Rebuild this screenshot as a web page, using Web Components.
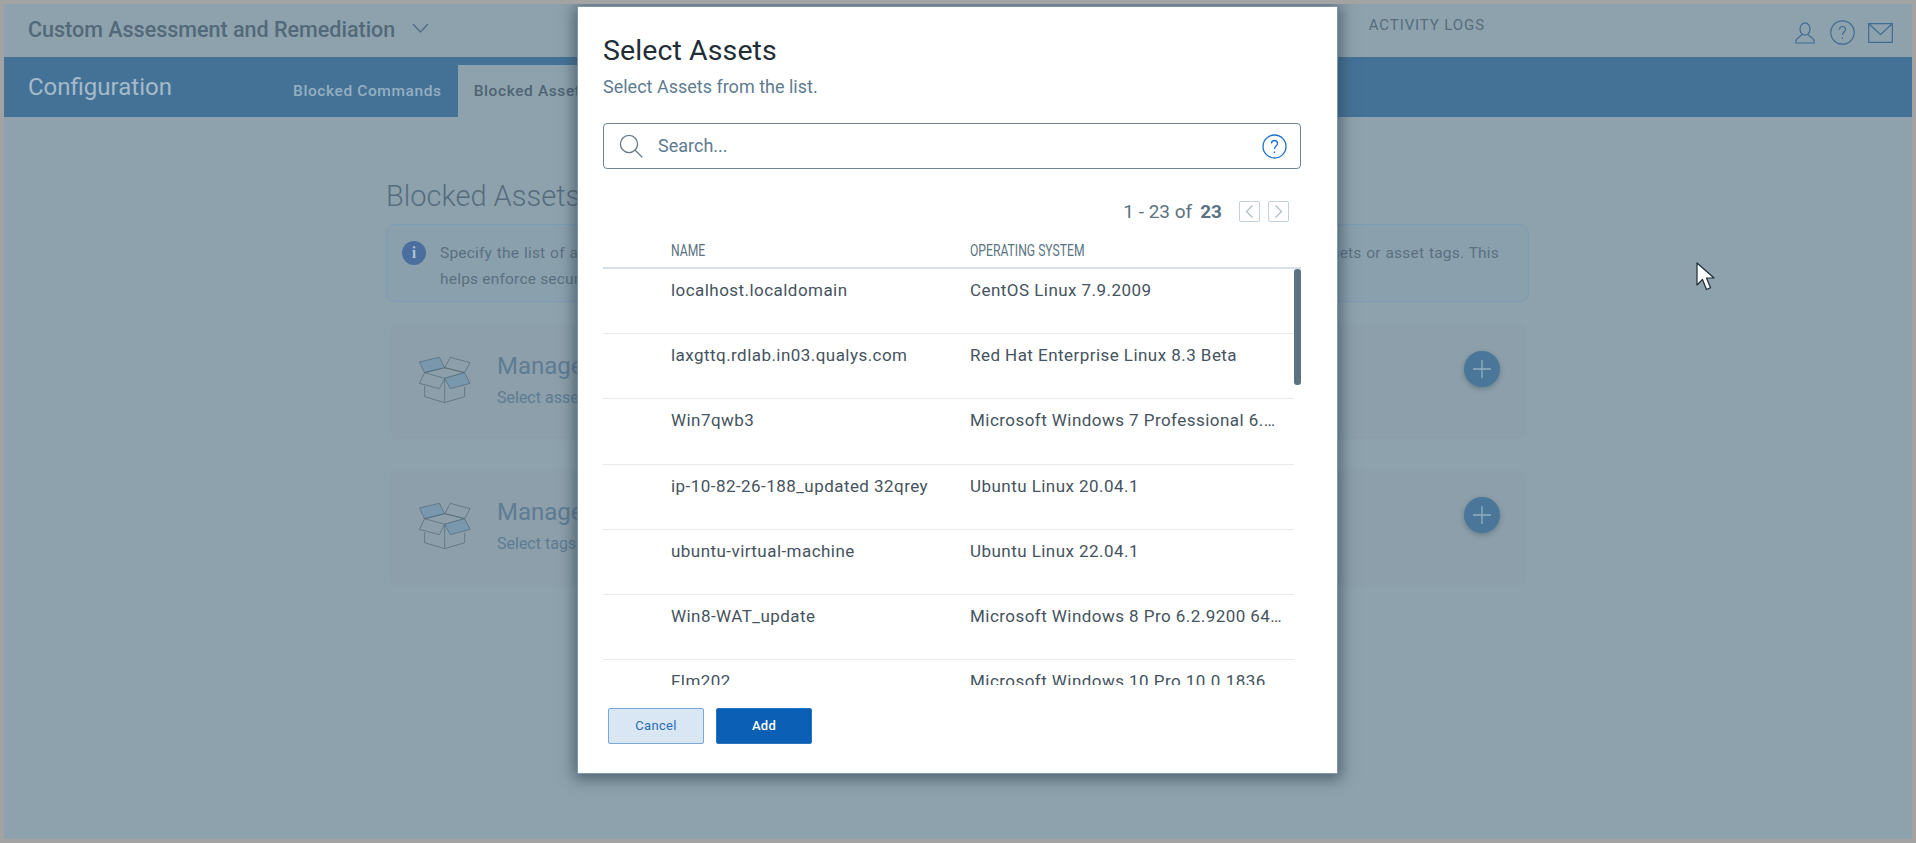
<!DOCTYPE html>
<html>
<head>
<meta charset="utf-8">
<title>Select Assets</title>
<style>
html, body { margin: 0; height: 100%; overflow: hidden; }
body { background: #a3a3a3; padding: 4px 4px 4px 4px; box-sizing: border-box; font-family: Roboto, "Liberation Sans", sans-serif; }
</style>
</head>
<body>
<ui-app>
  <top-bar></top-bar>
  <config-bar></config-bar>
  <page-content></page-content>
  <asset-dialog>
    <asset-row name="localhost.localdomain" os="CentOS Linux 7.9.2009"></asset-row>
    <asset-row name="laxgttq.rdlab.in03.qualys.com" os="Red Hat Enterprise Linux 8.3 Beta"></asset-row>
    <asset-row name="Win7qwb3" os="Microsoft Windows 7 Professional 6.1.7601 64 bit Edition"></asset-row>
    <asset-row name="ip-10-82-26-188_updated 32qrey" os="Ubuntu Linux 20.04.1"></asset-row>
    <asset-row name="ubuntu-virtual-machine" os="Ubuntu Linux 22.04.1"></asset-row>
    <asset-row name="Win8-WAT_update" os="Microsoft Windows 8 Pro 6.2.9200 64 bit Edition"></asset-row>
    <asset-row name="Flm202" os="Microsoft Windows 10 Pro 10.0.18363 64 bit Edition"></asset-row>
  </asset-dialog>
  <mouse-cursor></mouse-cursor>
</ui-app>

<script>
// small helper, every element just sets its html in the shadow root
function shadow(el, html) {
    el.attachShadow({ mode: 'open' });
    el.shadowRoot.innerHTML = html;
}

class UiApp extends HTMLElement {
    constructor() {
        super();
        shadow(this, `
<style>
:host { display: flex; flex-direction: column; position: relative; height: 835px; background: #8ea2ad; overflow: hidden; }
</style>
<slot></slot>`);
    }
}

class TopBar extends HTMLElement {
    constructor() {
        super();
        shadow(this, `
<style>
:host { display: flex; align-items: center; height: 53px; padding: 0 19px 0 24px; color: #52697a; }
.title { font-size: 21.500px; font-weight: 500; margin-bottom: 3px; }
.chev { margin: 0 0 6px 17px; }
.logs { margin-left: auto; margin-right: 310px; font-size: 15px; letter-spacing: .9px; align-self: flex-start; margin-top: 12px; line-height: 18px; color: #566d7d; }
.icons { display: flex; align-items: center; gap: 13px; margin-top: 4px; }
.icons svg:first-child { margin-right: 2px; }
svg { display: block; fill: none; stroke: #3f6c93; stroke-width: 1.200; }
.chev { stroke: #4f6d84; }
</style>
<div class="title">Custom Assessment and Remediation</div>
<svg class="chev" width="17" height="10" viewBox="0 0 17 10"><path d="M1 1l7.500 8L16 1"/></svg>
<div class="logs">ACTIVITY LOGS</div>
<div class="icons">
  <svg width="20" height="22" viewBox="0 0 20 22"><ellipse cx="10" cy="7" rx="5" ry="6.200"/><path d="M7 12c0 2-6 4-6 6.500V21h18v-2.500C19 16 13 14 13 12"/></svg>
  <svg width="25" height="25" viewBox="0 0 25 25"><circle cx="12.500" cy="12.500" r="11.700"/><path d="M9.500 9.500c0-4 6-4 6 0 0 2.500-3 2.500-3 5.500M12.500 17.500v1.500"/></svg>
  <svg width="25" height="20" viewBox="0 0 25 20"><path d="M.7.7h23.600v18.600H.7zM.7.700l11.800 10.800L24.300.700"/></svg>
</div>`);
    }
}

class ConfigBar extends HTMLElement {
    constructor() {
        super();
        shadow(this, `
<style>
:host { display: flex; height: 60px; background: #447297; padding-left: 24px; align-items: flex-end; }
.name { font-size: 24px; color: #a5bac8; align-self: center; width: 249px; }
.tab { height: 52px; line-height: 53px; font-size: 15.500px; font-weight: 500; letter-spacing: .6px; padding: 0 16px; color: #94afc0; white-space: nowrap; }
.tab.on { background: #8ea2ad; color: #4f6474; width: 220px; }
</style>
<div class="name">Configuration</div>
<div class="tab">Blocked Commands</div>
<div class="tab on">Blocked Assets</div>`);
    }
}

class BoxIcon extends HTMLElement {
    constructor() {
        super();
        shadow(this, `
<style>
:host { display: block; width: 55px; height: 49px; }
svg { display: block; fill: none; stroke: #566c7a; stroke-width: 2.200; stroke-linejoin: round; }
.f { fill: #7997ad; }
</style>
<svg width="55" height="49" viewBox="140 140 165 147">
  <path class="f" d="M147 158l60-14 16 31-60 15z"/>
  <path d="M240 144l59 16-16 30-60-15z"/>
  <path d="M163 190l60-15 60 15-60 17z"/>
  <path d="M163 190l-16 32 60 16 16-31"/>
  <path class="f" d="M283 190l16 32-59 16-17-31z"/>
  <path d="M163 230v32l60 18 60-18v-30M223 207v73"/>
</svg>`);
    }
}

class ManageCard extends HTMLElement {
    constructor() {
        super();
        shadow(this, `
<style>
:host { display: flex; height: 110px; background: #8c9faa; border-radius: 6px; box-shadow: 0 0 4px rgba(100,125,140,.2); padding: 29px 0 0 25px; box-sizing: border-box; position: relative; }
.txt { margin: -5px 0 0 25px; }
.t { font-size: 24px; line-height: 30px; color: #5e7c93; }
.s { font-size: 16px; line-height: 24px; margin-top: 5px; color: #5f7c92; }
.add { position: absolute; right: 23px; top: 24px; width: 36px; height: 36px; border-radius: 50%; background: #4a7699; box-shadow: 0 2px 5px rgba(60,85,105,.45); }
.add svg { display: block; margin: 9px; stroke: #93aec0; stroke-width: 1.300; }
</style>
<box-icon></box-icon>
<div class="txt"><div class="t">${this.getAttribute('heading')}</div><div class="s">${this.getAttribute('sub')}</div></div>
<div class="add"><svg width="18" height="18" viewBox="0 0 18 18"><path d="M9 0v18M0 9h18"/></svg></div>`);
    }
}

class PageContent extends HTMLElement {
    constructor() {
        super();
        shadow(this, `
<style>
:host { display: block; padding: 0 383px 0 382px; }
h2 { margin: 0; padding-top: 60px; font-size: 29px; font-weight: 300; line-height: 38px; height: 47px; color: #566d7e; }
.info { display: flex; height: 78px; box-sizing: border-box; border: 1px solid #7d9cb6; border-radius: 9px; padding: 15px 29px 0 15px; background: #8ba0ad; }
.i { flex: none; width: 24px; height: 24px; border-radius: 50%; background: #4a6f9e; color: #a9bfd2; font: 700 16px/24px "Liberation Serif", serif; text-align: center; margin: 1px 14px 0 0; }
.msg { font-size: 15.500px; line-height: 26px; letter-spacing: .2px; color: #5a7081; flex: 1; min-width: 0; }
.l1 { text-align-last: justify; white-space: nowrap; }
.cards { display: flex; flex-direction: column; gap: 36px; padding: 25px 6px 0; }
</style>
<h2>Blocked Assets</h2>
<div class="info">
  <div class="i">i</div>
  <div class="msg">
    <div class="l1">Specify the list of assets on which the configured commands must be blocked from use by selecting from available list of assets or asset tags. This</div>
    <div>helps enforce security policies on selected assets.</div>
  </div>
</div>
<div class="cards">
  <manage-card heading="Manage Assets" sub="Select assets from the list"></manage-card>
  <manage-card heading="Manage Tags" sub="Select tags from the list"></manage-card>
</div>`);
    }
}

class AssetRow extends HTMLElement {
    constructor() {
        super();
        shadow(this, `
<style>
:host { display: grid; grid-template-columns: 299px 314px; height: 65.200px; box-sizing: border-box; border-bottom: 1px solid #e6ebef; padding: 9px 0 0 68px; font-size: 17px; line-height: 24px; color: #45535e; letter-spacing: .45px; }
div { white-space: nowrap; overflow: hidden; text-overflow: ellipsis; }
</style>
<div>${this.getAttribute('name')}</div>
<div>${this.getAttribute('os')}</div>`);
    }
}

class AssetDialog extends HTMLElement {
    constructor() {
        super();
        shadow(this, `
<style>
:host { display: block; position: absolute; left: 573px; top: 2px; width: 761px; height: 768px; box-sizing: border-box; background: #fff; border: 1px solid #7d98a8; box-shadow: 0 2px 14px 3px rgba(45,65,78,.65); padding: 0 36px 0 25px; }
h1 { margin: 26px 0 0; font-size: 28.500px; font-weight: 400; line-height: 36px; color: #222d36; letter-spacing: .1px; }
.sub { margin-top: 6px; font-size: 18px; line-height: 24px; color: #5e7b90; }
.search { display: flex; align-items: center; height: 46px; box-sizing: border-box; margin-top: 24px; border: 1px solid #6f8796; border-radius: 4px; padding: 0 13px 0 15px; font-size: 18px; color: #5e7b90; }
.search span { flex: 1; margin: 0 0 2px 15px; }
.search svg { display: block; fill: none; }
.pager { display: flex; justify-content: flex-end; align-items: center; gap: 8px; height: 21px; margin-top: 32px; padding-right: 12px; font-size: 19px; color: #5a7282; }
.pager b { font-weight: 700; margin-right: 9px; }
.pg { width: 21px; height: 21px; box-sizing: border-box; border: 1.500px solid #c5d1da; border-radius: 2px; }
.pg svg { display: block; margin: 3px 0 0 5px; fill: none; stroke: #aebcc7; stroke-width: 1.200; }
.head { display: grid; grid-template-columns: 299px 1fr; height: 47px; box-sizing: border-box; padding: 18px 0 0 68px; border-bottom: 2px solid #d8dfe6; font-size: 16px; line-height: 22px; color: #5a7282; white-space: nowrap; }
.head span { display: inline-block; transform: scaleX(.76); transform-origin: left center; }
.body { position: relative; height: 416px; overflow: hidden; }
.rows { width: 691px; }
.thumb { position: absolute; right: 0; top: 0; width: 7px; height: 116px; border-radius: 3px; background: #5a7282; }
.foot { display: flex; gap: 12px; margin: 23px 0 0 5px; }
.btn { width: 96px; height: 36px; box-sizing: border-box; border-radius: 2px; font-size: 13px; line-height: 34px; text-align: center; letter-spacing: .3px; }
.cancel { background: #d9e6f4; border: 1px solid #7ba7d9; color: #2a6db5; }
.add { background: #0b5fb4; border: 1px solid #2a74c0; color: #fff; font-weight: 500; }
</style>
<h1>Select Assets</h1>
<div class="sub">Select Assets from the list.</div>
<div class="search">
  <svg width="24" height="24" viewBox="0 0 24 24" stroke="#64798a" stroke-width="1.300"><circle cx="10" cy="10" r="8.600"/><path d="M16.200 16.200l7 7"/></svg>
  <span>Search...</span>
  <svg width="25" height="25" viewBox="0 0 25 25" stroke="#1a6fc9" stroke-width="1.300"><circle cx="12.500" cy="12.500" r="11.500"/><path d="M9.500 9.500c0-4 6-4 6 0 0 2.500-3 2.500-3 5.500M12.500 17.500v1.500"/></svg>
</div>
<div class="pager">
  <span>1 - 23 of</span><b>23</b>
  <div class="pg"><svg width="9" height="13" viewBox="0 0 9 13"><path d="M7.500 .5L1.500 6.500l6 6"/></svg></div>
  <div class="pg"><svg width="9" height="13" viewBox="0 0 9 13"><path d="M1.500 .5l6 6-6 6"/></svg></div>
</div>
<div class="head"><div><span>NAME</span></div><div><span>OPERATING SYSTEM</span></div></div>
<div class="body"><div class="rows"><slot></slot></div><div class="thumb"></div></div>
<div class="foot"><div class="btn cancel">Cancel</div><div class="btn add">Add</div></div>`);
    }
}

class MouseCursor extends HTMLElement {
    constructor() {
        super();
        shadow(this, `
<style>
:host { display: block; position: absolute; left: 1692px; top: 258px; width: 20px; height: 30px; }
svg { display: block; }
</style>
<svg width="20" height="30" viewBox="0 0 20 30"><path d="M1 1v22l5.500-5.500 4 10 4-1.700-4-9.800H18z" fill="#fff" stroke="#1d2a33" stroke-width="1.200" stroke-linejoin="round"/></svg>`);
    }
}

customElements.define('ui-app', UiApp);
customElements.define('top-bar', TopBar);
customElements.define('config-bar', ConfigBar);
customElements.define('box-icon', BoxIcon);
customElements.define('manage-card', ManageCard);
customElements.define('page-content', PageContent);
customElements.define('asset-row', AssetRow);
customElements.define('asset-dialog', AssetDialog);
customElements.define('mouse-cursor', MouseCursor);
</script>
</body>
</html>
